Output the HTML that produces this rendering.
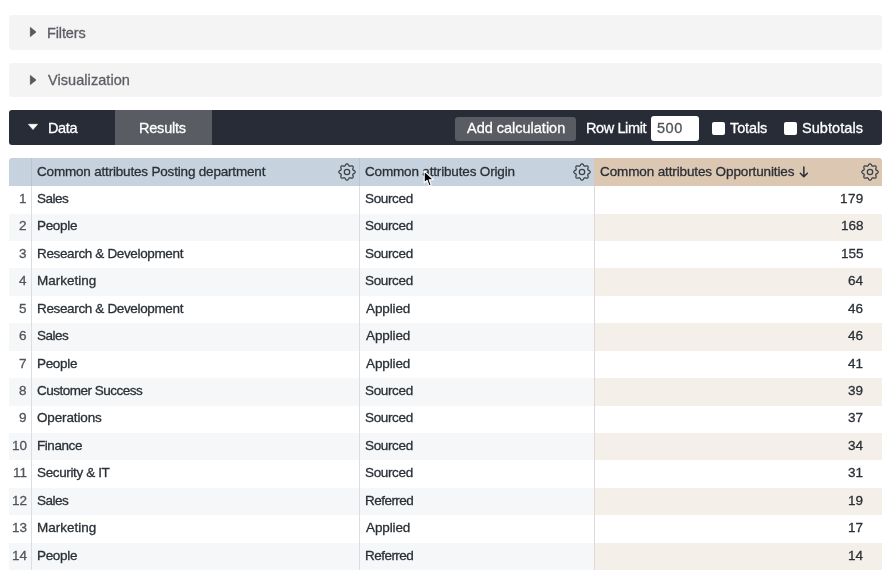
<!DOCTYPE html><html><head><meta charset="utf-8"><style>
*{box-sizing:border-box;margin:0;padding:0}
html,body{width:893px;height:583px;overflow:hidden;background:#fff;font-family:"Liberation Sans",sans-serif;position:relative}
.a{position:absolute}
.t{position:absolute;white-space:nowrap;-webkit-text-stroke:0.3px currentColor;will-change:transform}
.panel{position:absolute;left:9px;width:873px;background:#f4f4f4;border-radius:4px}
.ptri{position:absolute;left:30px;width:0;height:0;border-top:4.8px solid transparent;border-bottom:4.8px solid transparent;border-left:6.4px solid #55585c}
.cb{position:absolute;top:121.8px;width:13.4px;height:13.6px;background:#fff;border-radius:2px}
.vl{position:absolute;width:1px;background:#dadde2}
.gear{position:absolute;top:162.8px}
</style></head><body>
<div class="panel" style="top:14.8px;height:35.2px"></div><svg class="a" style="left:28px;top:24.5px" width="10" height="14" viewBox="0 0 10 14"><path d="M2.4 2.4 L8.0 7 L2.4 11.6 Z" fill="#55585c" stroke="#55585c" stroke-width="0.8" stroke-linejoin="round"/></svg>
<div class="panel" style="top:62.6px;height:34.8px"></div><svg class="a" style="left:28px;top:72.5px" width="10" height="14" viewBox="0 0 10 14"><path d="M2.4 2.4 L8.0 7 L2.4 11.6 Z" fill="#55585c" stroke="#55585c" stroke-width="0.8" stroke-linejoin="round"/></svg>
<div class="a" style="left:9px;top:110px;width:873px;height:34.7px;background:#272c37;border-radius:3px"></div>
<svg class="a" style="left:26.3px;top:120px" width="14" height="12" viewBox="0 0 14 12"><path d="M2.4 4.3 L11.6 4.3 L7 9.6 Z" fill="#fff" stroke="#fff" stroke-width="0.6" stroke-linejoin="round"/></svg>
<div class="a" style="left:115px;top:110px;width:96.6px;height:34.7px;background:#595c63"></div>
<div class="a" style="left:455.3px;top:116.5px;width:121px;height:24.3px;background:#595c63;border-radius:3px"></div>
<div class="a" style="left:651px;top:115.5px;width:47.6px;height:25px;background:#fff;border-radius:3px"></div>
<div class="cb" style="left:711.8px"></div><div class="cb" style="left:783.8px"></div>
<div class="a" style="left:9px;top:157.5px;width:585.3px;height:28.7px;background:#c6d3de;border-top-left-radius:3px"></div>
<div class="a" style="left:594.3px;top:157.5px;width:287.3px;height:28.7px;background:#dcc8b2;border-top-right-radius:3px"></div>
<div class="vl" style="left:31px;top:157.5px;height:28.7px;background:#b9c6d1"></div>
<div class="vl" style="left:359px;top:157.5px;height:28.7px;background:#b9c6d1"></div>
<div class="a" style="left:9px;top:213.63px;width:585.3px;height:27.43px;background:#f6f7f9"></div>
<div class="a" style="left:594.3px;top:213.63px;width:287.3px;height:27.43px;background:#f5efea"></div>
<div class="a" style="left:9px;top:268.49px;width:585.3px;height:27.43px;background:#f6f7f9"></div>
<div class="a" style="left:594.3px;top:268.49px;width:287.3px;height:27.43px;background:#f5efea"></div>
<div class="a" style="left:9px;top:323.35px;width:585.3px;height:27.43px;background:#f6f7f9"></div>
<div class="a" style="left:594.3px;top:323.35px;width:287.3px;height:27.43px;background:#f5efea"></div>
<div class="a" style="left:9px;top:378.21px;width:585.3px;height:27.43px;background:#f6f7f9"></div>
<div class="a" style="left:594.3px;top:378.21px;width:287.3px;height:27.43px;background:#f5efea"></div>
<div class="a" style="left:9px;top:433.07px;width:585.3px;height:27.43px;background:#f6f7f9"></div>
<div class="a" style="left:594.3px;top:433.07px;width:287.3px;height:27.43px;background:#f5efea"></div>
<div class="a" style="left:9px;top:487.93px;width:585.3px;height:27.43px;background:#f6f7f9"></div>
<div class="a" style="left:594.3px;top:487.93px;width:287.3px;height:27.43px;background:#f5efea"></div>
<div class="a" style="left:9px;top:542.79px;width:585.3px;height:27.43px;background:#f6f7f9"></div>
<div class="a" style="left:594.3px;top:542.79px;width:287.3px;height:27.43px;background:#f5efea"></div>
<div class="vl" style="left:31px;top:186.2px;height:384px"></div>
<div class="vl" style="left:359px;top:186.2px;height:384px"></div>
<div class="vl" style="left:594px;top:186.2px;height:384px;background:#e0d8d8"></div>
<svg class="a" style="left:337.0px;top:161.8px" width="20" height="20" viewBox="0 0 20 20"><path d="M10.00,1.80 L10.32,1.85 L10.63,2.01 L10.92,2.25 L11.18,2.55 L11.41,2.89 L11.62,3.24 L11.82,3.56 L12.00,3.84 L12.20,4.05 L12.41,4.18 L12.66,4.24 L12.94,4.23 L13.27,4.16 L13.63,4.07 L14.03,3.97 L14.43,3.90 L14.83,3.87 L15.21,3.90 L15.53,4.01 L15.80,4.20 L15.99,4.47 L16.10,4.79 L16.13,5.17 L16.10,5.57 L16.03,5.97 L15.93,6.37 L15.84,6.73 L15.77,7.06 L15.76,7.34 L15.82,7.59 L15.95,7.80 L16.16,8.00 L16.44,8.18 L16.76,8.38 L17.11,8.59 L17.45,8.82 L17.75,9.08 L17.99,9.37 L18.15,9.68 L18.20,10.00 L18.15,10.32 L17.99,10.63 L17.75,10.92 L17.45,11.18 L17.11,11.41 L16.76,11.62 L16.44,11.82 L16.16,12.00 L15.95,12.20 L15.82,12.41 L15.76,12.66 L15.77,12.94 L15.84,13.27 L15.93,13.63 L16.03,14.03 L16.10,14.43 L16.13,14.83 L16.10,15.21 L15.99,15.53 L15.80,15.80 L15.53,15.99 L15.21,16.10 L14.83,16.13 L14.43,16.10 L14.03,16.03 L13.63,15.93 L13.27,15.84 L12.94,15.77 L12.66,15.76 L12.41,15.82 L12.20,15.95 L12.00,16.16 L11.82,16.44 L11.62,16.76 L11.41,17.11 L11.18,17.45 L10.92,17.75 L10.63,17.99 L10.32,18.15 L10.00,18.20 L9.68,18.15 L9.37,17.99 L9.08,17.75 L8.82,17.45 L8.59,17.11 L8.38,16.76 L8.18,16.44 L8.00,16.16 L7.80,15.95 L7.59,15.82 L7.34,15.76 L7.06,15.77 L6.73,15.84 L6.37,15.93 L5.97,16.03 L5.57,16.10 L5.17,16.13 L4.79,16.10 L4.47,15.99 L4.20,15.80 L4.01,15.53 L3.90,15.21 L3.87,14.83 L3.90,14.43 L3.97,14.03 L4.07,13.63 L4.16,13.27 L4.23,12.94 L4.24,12.66 L4.18,12.41 L4.05,12.20 L3.84,12.00 L3.56,11.82 L3.24,11.62 L2.89,11.41 L2.55,11.18 L2.25,10.92 L2.01,10.63 L1.85,10.32 L1.80,10.00 L1.85,9.68 L2.01,9.37 L2.25,9.08 L2.55,8.82 L2.89,8.59 L3.24,8.38 L3.56,8.18 L3.84,8.00 L4.05,7.80 L4.18,7.59 L4.24,7.34 L4.23,7.06 L4.16,6.73 L4.07,6.37 L3.97,5.97 L3.90,5.57 L3.87,5.17 L3.90,4.79 L4.01,4.47 L4.20,4.20 L4.47,4.01 L4.79,3.90 L5.17,3.87 L5.57,3.90 L5.97,3.97 L6.37,4.07 L6.73,4.16 L7.06,4.23 L7.34,4.24 L7.59,4.18 L7.80,4.05 L8.00,3.84 L8.18,3.56 L8.38,3.24 L8.59,2.89 L8.82,2.55 L9.08,2.25 L9.37,2.01 L9.68,1.85 Z" fill="none" stroke="#3a4046" stroke-width="1.25" stroke-linejoin="round"/><circle cx="10" cy="10" r="2.7" fill="none" stroke="#3a4046" stroke-width="1.25"/></svg>
<svg class="a" style="left:571.5px;top:161.8px" width="20" height="20" viewBox="0 0 20 20"><path d="M10.00,1.80 L10.32,1.85 L10.63,2.01 L10.92,2.25 L11.18,2.55 L11.41,2.89 L11.62,3.24 L11.82,3.56 L12.00,3.84 L12.20,4.05 L12.41,4.18 L12.66,4.24 L12.94,4.23 L13.27,4.16 L13.63,4.07 L14.03,3.97 L14.43,3.90 L14.83,3.87 L15.21,3.90 L15.53,4.01 L15.80,4.20 L15.99,4.47 L16.10,4.79 L16.13,5.17 L16.10,5.57 L16.03,5.97 L15.93,6.37 L15.84,6.73 L15.77,7.06 L15.76,7.34 L15.82,7.59 L15.95,7.80 L16.16,8.00 L16.44,8.18 L16.76,8.38 L17.11,8.59 L17.45,8.82 L17.75,9.08 L17.99,9.37 L18.15,9.68 L18.20,10.00 L18.15,10.32 L17.99,10.63 L17.75,10.92 L17.45,11.18 L17.11,11.41 L16.76,11.62 L16.44,11.82 L16.16,12.00 L15.95,12.20 L15.82,12.41 L15.76,12.66 L15.77,12.94 L15.84,13.27 L15.93,13.63 L16.03,14.03 L16.10,14.43 L16.13,14.83 L16.10,15.21 L15.99,15.53 L15.80,15.80 L15.53,15.99 L15.21,16.10 L14.83,16.13 L14.43,16.10 L14.03,16.03 L13.63,15.93 L13.27,15.84 L12.94,15.77 L12.66,15.76 L12.41,15.82 L12.20,15.95 L12.00,16.16 L11.82,16.44 L11.62,16.76 L11.41,17.11 L11.18,17.45 L10.92,17.75 L10.63,17.99 L10.32,18.15 L10.00,18.20 L9.68,18.15 L9.37,17.99 L9.08,17.75 L8.82,17.45 L8.59,17.11 L8.38,16.76 L8.18,16.44 L8.00,16.16 L7.80,15.95 L7.59,15.82 L7.34,15.76 L7.06,15.77 L6.73,15.84 L6.37,15.93 L5.97,16.03 L5.57,16.10 L5.17,16.13 L4.79,16.10 L4.47,15.99 L4.20,15.80 L4.01,15.53 L3.90,15.21 L3.87,14.83 L3.90,14.43 L3.97,14.03 L4.07,13.63 L4.16,13.27 L4.23,12.94 L4.24,12.66 L4.18,12.41 L4.05,12.20 L3.84,12.00 L3.56,11.82 L3.24,11.62 L2.89,11.41 L2.55,11.18 L2.25,10.92 L2.01,10.63 L1.85,10.32 L1.80,10.00 L1.85,9.68 L2.01,9.37 L2.25,9.08 L2.55,8.82 L2.89,8.59 L3.24,8.38 L3.56,8.18 L3.84,8.00 L4.05,7.80 L4.18,7.59 L4.24,7.34 L4.23,7.06 L4.16,6.73 L4.07,6.37 L3.97,5.97 L3.90,5.57 L3.87,5.17 L3.90,4.79 L4.01,4.47 L4.20,4.20 L4.47,4.01 L4.79,3.90 L5.17,3.87 L5.57,3.90 L5.97,3.97 L6.37,4.07 L6.73,4.16 L7.06,4.23 L7.34,4.24 L7.59,4.18 L7.80,4.05 L8.00,3.84 L8.18,3.56 L8.38,3.24 L8.59,2.89 L8.82,2.55 L9.08,2.25 L9.37,2.01 L9.68,1.85 Z" fill="none" stroke="#3a4046" stroke-width="1.25" stroke-linejoin="round"/><circle cx="10" cy="10" r="2.7" fill="none" stroke="#3a4046" stroke-width="1.25"/></svg>
<svg class="a" style="left:859.5px;top:161.8px" width="20" height="20" viewBox="0 0 20 20"><path d="M10.00,1.80 L10.32,1.85 L10.63,2.01 L10.92,2.25 L11.18,2.55 L11.41,2.89 L11.62,3.24 L11.82,3.56 L12.00,3.84 L12.20,4.05 L12.41,4.18 L12.66,4.24 L12.94,4.23 L13.27,4.16 L13.63,4.07 L14.03,3.97 L14.43,3.90 L14.83,3.87 L15.21,3.90 L15.53,4.01 L15.80,4.20 L15.99,4.47 L16.10,4.79 L16.13,5.17 L16.10,5.57 L16.03,5.97 L15.93,6.37 L15.84,6.73 L15.77,7.06 L15.76,7.34 L15.82,7.59 L15.95,7.80 L16.16,8.00 L16.44,8.18 L16.76,8.38 L17.11,8.59 L17.45,8.82 L17.75,9.08 L17.99,9.37 L18.15,9.68 L18.20,10.00 L18.15,10.32 L17.99,10.63 L17.75,10.92 L17.45,11.18 L17.11,11.41 L16.76,11.62 L16.44,11.82 L16.16,12.00 L15.95,12.20 L15.82,12.41 L15.76,12.66 L15.77,12.94 L15.84,13.27 L15.93,13.63 L16.03,14.03 L16.10,14.43 L16.13,14.83 L16.10,15.21 L15.99,15.53 L15.80,15.80 L15.53,15.99 L15.21,16.10 L14.83,16.13 L14.43,16.10 L14.03,16.03 L13.63,15.93 L13.27,15.84 L12.94,15.77 L12.66,15.76 L12.41,15.82 L12.20,15.95 L12.00,16.16 L11.82,16.44 L11.62,16.76 L11.41,17.11 L11.18,17.45 L10.92,17.75 L10.63,17.99 L10.32,18.15 L10.00,18.20 L9.68,18.15 L9.37,17.99 L9.08,17.75 L8.82,17.45 L8.59,17.11 L8.38,16.76 L8.18,16.44 L8.00,16.16 L7.80,15.95 L7.59,15.82 L7.34,15.76 L7.06,15.77 L6.73,15.84 L6.37,15.93 L5.97,16.03 L5.57,16.10 L5.17,16.13 L4.79,16.10 L4.47,15.99 L4.20,15.80 L4.01,15.53 L3.90,15.21 L3.87,14.83 L3.90,14.43 L3.97,14.03 L4.07,13.63 L4.16,13.27 L4.23,12.94 L4.24,12.66 L4.18,12.41 L4.05,12.20 L3.84,12.00 L3.56,11.82 L3.24,11.62 L2.89,11.41 L2.55,11.18 L2.25,10.92 L2.01,10.63 L1.85,10.32 L1.80,10.00 L1.85,9.68 L2.01,9.37 L2.25,9.08 L2.55,8.82 L2.89,8.59 L3.24,8.38 L3.56,8.18 L3.84,8.00 L4.05,7.80 L4.18,7.59 L4.24,7.34 L4.23,7.06 L4.16,6.73 L4.07,6.37 L3.97,5.97 L3.90,5.57 L3.87,5.17 L3.90,4.79 L4.01,4.47 L4.20,4.20 L4.47,4.01 L4.79,3.90 L5.17,3.87 L5.57,3.90 L5.97,3.97 L6.37,4.07 L6.73,4.16 L7.06,4.23 L7.34,4.24 L7.59,4.18 L7.80,4.05 L8.00,3.84 L8.18,3.56 L8.38,3.24 L8.59,2.89 L8.82,2.55 L9.08,2.25 L9.37,2.01 L9.68,1.85 Z" fill="none" stroke="#3a4046" stroke-width="1.25" stroke-linejoin="round"/><circle cx="10" cy="10" r="2.7" fill="none" stroke="#3a4046" stroke-width="1.25"/></svg>
<svg class="a" style="left:798px;top:165px" width="12" height="14" viewBox="0 0 12 14"><path d="M5.85 2 V11.6 M2.3 8.2 L5.85 11.8 L9.4 8.2" fill="none" stroke="#2a3036" stroke-width="1.5" stroke-linecap="round" stroke-linejoin="round"/></svg>
<div class="t" style="left:47.47px;top:25.63px;font-size:14.5px;line-height:14.5px;color:#5b5e63;letter-spacing:-0.114px">Filters</div>
<div class="t" style="left:48.20px;top:72.63px;font-size:14.5px;line-height:14.5px;color:#5b5e63;letter-spacing:0.064px">Visualization</div>
<div class="t" style="left:47.57px;top:120.63px;font-size:14.5px;line-height:14.5px;color:#ffffff;letter-spacing:-0.396px">Data</div>
<div class="t" style="left:139.27px;top:120.93px;font-size:14.5px;line-height:14.5px;color:#ffffff;letter-spacing:-0.211px">Results</div>
<div class="t" style="left:467.10px;top:121.43px;font-size:14.5px;line-height:14.5px;color:#ffffff;letter-spacing:-0.009px">Add calculation</div>
<div class="t" style="left:585.97px;top:121.33px;font-size:14.5px;line-height:14.5px;color:#ffffff;letter-spacing:-0.396px">Row Limit</div>
<div class="t" style="left:657.15px;top:121.13px;font-size:14.5px;line-height:14.5px;color:#4f5358;letter-spacing:0.511px">500</div>
<div class="t" style="left:730.07px;top:120.93px;font-size:14.5px;line-height:14.5px;color:#ffffff;letter-spacing:-0.120px">Totals</div>
<div class="t" style="left:801.85px;top:120.93px;font-size:14.5px;line-height:14.5px;color:#ffffff;letter-spacing:0.069px">Subtotals</div>
<div class="t" style="left:37.17px;top:164.97px;font-size:13.5px;line-height:13.5px;color:#2a3036;letter-spacing:-0.185px">Common attributes Posting department</div>
<div class="t" style="left:365.27px;top:164.97px;font-size:13.5px;line-height:13.5px;color:#2a3036;letter-spacing:-0.166px">Common attributes Origin</div>
<div class="t" style="left:600.07px;top:164.97px;font-size:13.5px;line-height:13.5px;color:#2a3036;letter-spacing:-0.121px">Common attributes Opportunities</div>
<div class="t" style="left:19.44px;top:191.97px;font-size:13.5px;line-height:13.5px;color:#50555b;letter-spacing:0.000px">1</div>
<div class="t" style="left:37.38px;top:191.97px;font-size:13.5px;line-height:13.5px;color:#2a3036;letter-spacing:-0.507px">Sales</div>
<div class="t" style="left:365.48px;top:191.97px;font-size:13.5px;line-height:13.5px;color:#2a3036;letter-spacing:-0.350px">Sourced</div>
<div class="t" style="left:839.96px;top:191.97px;font-size:13.5px;line-height:13.5px;color:#2a3036;letter-spacing:0.383px">179</div>
<div class="t" style="left:19.44px;top:219.40px;font-size:13.5px;line-height:13.5px;color:#50555b;letter-spacing:0.000px">2</div>
<div class="t" style="left:36.75px;top:219.40px;font-size:13.5px;line-height:13.5px;color:#2a3036;letter-spacing:-0.327px">People</div>
<div class="t" style="left:365.48px;top:219.40px;font-size:13.5px;line-height:13.5px;color:#2a3036;letter-spacing:-0.350px">Sourced</div>
<div class="t" style="left:840.72px;top:219.40px;font-size:13.5px;line-height:13.5px;color:#2a3036;letter-spacing:0.000px">168</div>
<div class="t" style="left:19.44px;top:246.83px;font-size:13.5px;line-height:13.5px;color:#50555b;letter-spacing:0.000px">3</div>
<div class="t" style="left:36.75px;top:246.83px;font-size:13.5px;line-height:13.5px;color:#2a3036;letter-spacing:-0.353px">Research &amp; Development</div>
<div class="t" style="left:365.48px;top:246.83px;font-size:13.5px;line-height:13.5px;color:#2a3036;letter-spacing:-0.350px">Sourced</div>
<div class="t" style="left:840.72px;top:246.83px;font-size:13.5px;line-height:13.5px;color:#2a3036;letter-spacing:0.000px">155</div>
<div class="t" style="left:19.23px;top:274.26px;font-size:13.5px;line-height:13.5px;color:#50555b;letter-spacing:0.000px">4</div>
<div class="t" style="left:36.75px;top:274.26px;font-size:13.5px;line-height:13.5px;color:#2a3036;letter-spacing:-0.008px">Marketing</div>
<div class="t" style="left:365.48px;top:274.26px;font-size:13.5px;line-height:13.5px;color:#2a3036;letter-spacing:-0.350px">Sourced</div>
<div class="t" style="left:848.02px;top:274.26px;font-size:13.5px;line-height:13.5px;color:#2a3036;letter-spacing:0.000px">64</div>
<div class="t" style="left:19.44px;top:301.69px;font-size:13.5px;line-height:13.5px;color:#50555b;letter-spacing:0.000px">5</div>
<div class="t" style="left:36.75px;top:301.69px;font-size:13.5px;line-height:13.5px;color:#2a3036;letter-spacing:-0.353px">Research &amp; Development</div>
<div class="t" style="left:365.90px;top:301.69px;font-size:13.5px;line-height:13.5px;color:#2a3036;letter-spacing:-0.113px">Applied</div>
<div class="t" style="left:848.23px;top:301.69px;font-size:13.5px;line-height:13.5px;color:#2a3036;letter-spacing:0.000px">46</div>
<div class="t" style="left:19.44px;top:329.12px;font-size:13.5px;line-height:13.5px;color:#50555b;letter-spacing:0.000px">6</div>
<div class="t" style="left:37.38px;top:329.12px;font-size:13.5px;line-height:13.5px;color:#2a3036;letter-spacing:-0.507px">Sales</div>
<div class="t" style="left:365.90px;top:329.12px;font-size:13.5px;line-height:13.5px;color:#2a3036;letter-spacing:-0.113px">Applied</div>
<div class="t" style="left:848.23px;top:329.12px;font-size:13.5px;line-height:13.5px;color:#2a3036;letter-spacing:0.000px">46</div>
<div class="t" style="left:19.44px;top:356.55px;font-size:13.5px;line-height:13.5px;color:#50555b;letter-spacing:0.000px">7</div>
<div class="t" style="left:36.75px;top:356.55px;font-size:13.5px;line-height:13.5px;color:#2a3036;letter-spacing:-0.327px">People</div>
<div class="t" style="left:365.90px;top:356.55px;font-size:13.5px;line-height:13.5px;color:#2a3036;letter-spacing:-0.113px">Applied</div>
<div class="t" style="left:848.23px;top:356.55px;font-size:13.5px;line-height:13.5px;color:#2a3036;letter-spacing:0.000px">41</div>
<div class="t" style="left:19.44px;top:383.98px;font-size:13.5px;line-height:13.5px;color:#50555b;letter-spacing:0.000px">8</div>
<div class="t" style="left:37.17px;top:383.98px;font-size:13.5px;line-height:13.5px;color:#2a3036;letter-spacing:-0.495px">Customer Success</div>
<div class="t" style="left:365.48px;top:383.98px;font-size:13.5px;line-height:13.5px;color:#2a3036;letter-spacing:-0.350px">Sourced</div>
<div class="t" style="left:848.23px;top:383.98px;font-size:13.5px;line-height:13.5px;color:#2a3036;letter-spacing:0.000px">39</div>
<div class="t" style="left:19.44px;top:411.41px;font-size:13.5px;line-height:13.5px;color:#50555b;letter-spacing:0.000px">9</div>
<div class="t" style="left:37.17px;top:411.41px;font-size:13.5px;line-height:13.5px;color:#2a3036;letter-spacing:-0.131px">Operations</div>
<div class="t" style="left:365.48px;top:411.41px;font-size:13.5px;line-height:13.5px;color:#2a3036;letter-spacing:-0.350px">Sourced</div>
<div class="t" style="left:848.23px;top:411.41px;font-size:13.5px;line-height:13.5px;color:#2a3036;letter-spacing:0.000px">37</div>
<div class="t" style="left:11.72px;top:438.84px;font-size:13.5px;line-height:13.5px;color:#50555b;letter-spacing:0.000px">10</div>
<div class="t" style="left:36.75px;top:438.84px;font-size:13.5px;line-height:13.5px;color:#2a3036;letter-spacing:-0.438px">Finance</div>
<div class="t" style="left:365.48px;top:438.84px;font-size:13.5px;line-height:13.5px;color:#2a3036;letter-spacing:-0.350px">Sourced</div>
<div class="t" style="left:848.02px;top:438.84px;font-size:13.5px;line-height:13.5px;color:#2a3036;letter-spacing:0.000px">34</div>
<div class="t" style="left:12.93px;top:466.27px;font-size:13.5px;line-height:13.5px;color:#50555b;letter-spacing:0.000px">11</div>
<div class="t" style="left:37.38px;top:466.27px;font-size:13.5px;line-height:13.5px;color:#2a3036;letter-spacing:-0.376px">Security &amp; IT</div>
<div class="t" style="left:365.48px;top:466.27px;font-size:13.5px;line-height:13.5px;color:#2a3036;letter-spacing:-0.350px">Sourced</div>
<div class="t" style="left:848.23px;top:466.27px;font-size:13.5px;line-height:13.5px;color:#2a3036;letter-spacing:0.000px">31</div>
<div class="t" style="left:11.93px;top:493.70px;font-size:13.5px;line-height:13.5px;color:#50555b;letter-spacing:0.000px">12</div>
<div class="t" style="left:37.38px;top:493.70px;font-size:13.5px;line-height:13.5px;color:#2a3036;letter-spacing:-0.507px">Sales</div>
<div class="t" style="left:364.85px;top:493.70px;font-size:13.5px;line-height:13.5px;color:#2a3036;letter-spacing:-0.530px">Referred</div>
<div class="t" style="left:848.23px;top:493.70px;font-size:13.5px;line-height:13.5px;color:#2a3036;letter-spacing:0.000px">19</div>
<div class="t" style="left:11.93px;top:521.13px;font-size:13.5px;line-height:13.5px;color:#50555b;letter-spacing:0.000px">13</div>
<div class="t" style="left:36.75px;top:521.13px;font-size:13.5px;line-height:13.5px;color:#2a3036;letter-spacing:-0.008px">Marketing</div>
<div class="t" style="left:365.90px;top:521.13px;font-size:13.5px;line-height:13.5px;color:#2a3036;letter-spacing:-0.113px">Applied</div>
<div class="t" style="left:848.23px;top:521.13px;font-size:13.5px;line-height:13.5px;color:#2a3036;letter-spacing:0.000px">17</div>
<div class="t" style="left:11.72px;top:548.56px;font-size:13.5px;line-height:13.5px;color:#50555b;letter-spacing:0.000px">14</div>
<div class="t" style="left:36.75px;top:548.56px;font-size:13.5px;line-height:13.5px;color:#2a3036;letter-spacing:-0.327px">People</div>
<div class="t" style="left:364.85px;top:548.56px;font-size:13.5px;line-height:13.5px;color:#2a3036;letter-spacing:-0.530px">Referred</div>
<div class="t" style="left:848.02px;top:548.56px;font-size:13.5px;line-height:13.5px;color:#2a3036;letter-spacing:0.000px">14</div>
<svg class="a" style="left:421.6px;top:169px" width="16" height="22" viewBox="0 0 16 22"><path d="M2.2 2.0 L2.2 13.8 L5.0 11.3 L7.1 16.9 L9.2 16.0 L7.2 10.8 L11.4 10.6 Z" fill="#000" stroke="#fff" stroke-width="1.1" stroke-linejoin="round"/></svg>
</body></html>
